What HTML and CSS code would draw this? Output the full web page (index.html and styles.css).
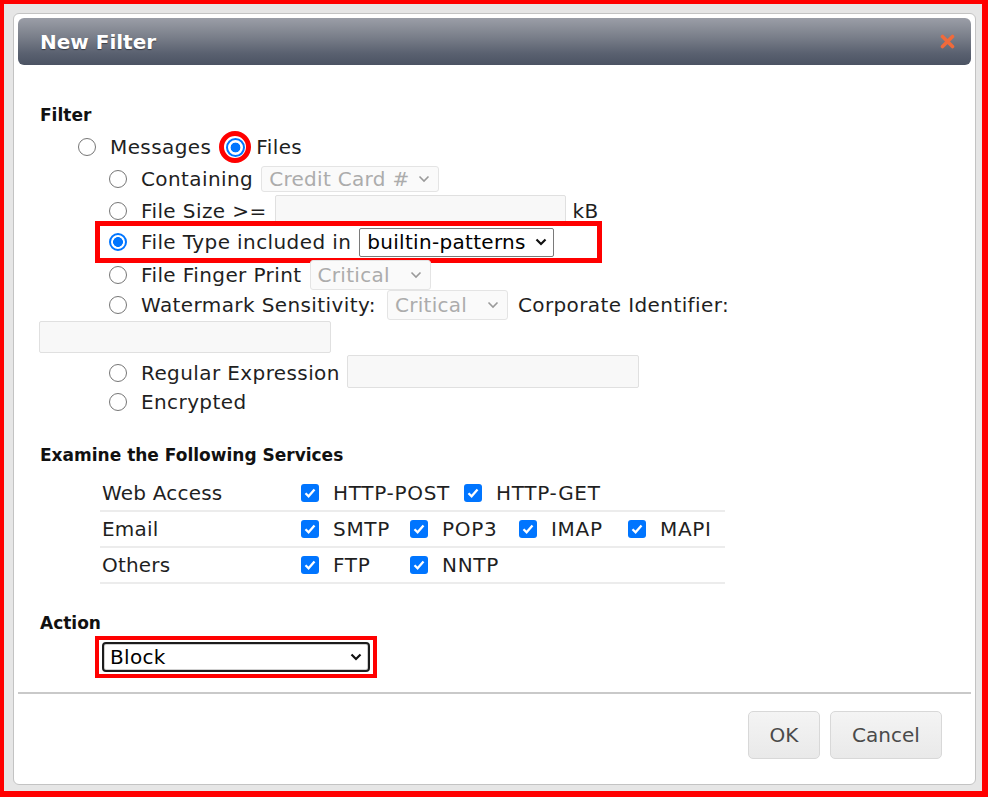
FILE: index.html
```html
<!DOCTYPE html>
<html>
<head>
<meta charset="utf-8">
<title>New Filter</title>
<link rel="stylesheet" href="styles.css">
</head>
<body>
<div class="frame">
  <div class="dialog">
    <div class="titlebar">
      <span class="title">New Filter</span>
      <svg class="close" width="15" height="15" viewBox="0 0 15 15"><path d="M2.5 2.5 L12.5 12.5 M12.5 2.5 L2.5 12.5" stroke="#f06a3a" stroke-width="3.6" stroke-linecap="round"/></svg>
    </div>
    <div class="content">
      <div class="heading h-filter">Filter</div>
      <div class="row lvl1">
        <span class="radio"></span><span class="lbl">Messages</span>
        <span class="ring"><span class="radio on"></span></span><span class="lbl">Files</span>
      </div>
      <div class="row lvl2">
        <span class="radio"></span><span class="lbl">Containing</span>
        <span class="select dis w-cc"><span class="val">Credit Card #</span><svg class="chev" width="12" height="8" viewBox="0 0 12 8"><path d="M1.5 1.5 L6 6 L10.5 1.5" fill="none" stroke="#9a9a9a" stroke-width="1.6"/></svg></span>
      </div>
      <div class="row lvl2">
        <span class="radio"></span><span class="lbl">File Size &gt;=</span>
        <span class="input dis w-size"></span><span class="lbl kb">kB</span>
      </div>
      <div class="row lvl2 annot-row">
        <span class="annot-box">
          <span class="radio on"></span><span class="lbl">File Type included in</span>
          <span class="select live w-bp"><span class="val">builtin-patterns</span><svg class="chev" width="12" height="8" viewBox="0 0 12 8"><path d="M1.5 1.5 L6 6 L10.5 1.5" fill="none" stroke="#111" stroke-width="2.2"/></svg></span>
        </span>
      </div>
      <div class="row lvl2 r-finger">
        <span class="radio"></span><span class="lbl">File Finger Print</span>
        <span class="select dis w-crit"><span class="val">Critical</span><svg class="chev" width="12" height="8" viewBox="0 0 12 8"><path d="M1.5 1.5 L6 6 L10.5 1.5" fill="none" stroke="#9a9a9a" stroke-width="1.6"/></svg></span>
      </div>
      <div class="row lvl2 r-water">
        <span class="radio"></span><span class="lbl">Watermark Sensitivity:</span>
        <span class="select dis w-crit"><span class="val">Critical</span><svg class="chev" width="12" height="8" viewBox="0 0 12 8"><path d="M1.5 1.5 L6 6 L10.5 1.5" fill="none" stroke="#9a9a9a" stroke-width="1.6"/></svg></span>
        <span class="lbl corp">Corporate Identifier:</span>
      </div>
      <div class="row r-corp">
        <span class="input dis w-corp"></span>
      </div>
      <div class="row lvl2 r-regex">
        <span class="radio"></span><span class="lbl">Regular Expression</span>
        <span class="input dis w-regex"></span>
      </div>
      <div class="row lvl2 r-enc">
        <span class="radio"></span><span class="lbl">Encrypted</span>
      </div>

      <div class="heading h-services">Examine the Following Services</div>
      <div class="services">
        <div class="srow">
          <div class="sname">Web Access</div>
          <div class="sitems flow">
            <span class="item"><span class="cb"><svg width="18" height="18" viewBox="0 0 18 18"><path d="M4.5 9.2 L7.6 12.3 L13.5 5.6" fill="none" stroke="#fff" stroke-width="2.3"/></svg></span><span class="lbl">HTTP-POST</span></span>
            <span class="item"><span class="cb"><svg width="18" height="18" viewBox="0 0 18 18"><path d="M4.5 9.2 L7.6 12.3 L13.5 5.6" fill="none" stroke="#fff" stroke-width="2.3"/></svg></span><span class="lbl">HTTP-GET</span></span>
          </div>
        </div>
        <div class="srow">
          <div class="sname">Email</div>
          <div class="sitems cols">
            <span class="item"><span class="cb"><svg width="18" height="18" viewBox="0 0 18 18"><path d="M4.5 9.2 L7.6 12.3 L13.5 5.6" fill="none" stroke="#fff" stroke-width="2.3"/></svg></span><span class="lbl">SMTP</span></span>
            <span class="item"><span class="cb"><svg width="18" height="18" viewBox="0 0 18 18"><path d="M4.5 9.2 L7.6 12.3 L13.5 5.6" fill="none" stroke="#fff" stroke-width="2.3"/></svg></span><span class="lbl">POP3</span></span>
            <span class="item"><span class="cb"><svg width="18" height="18" viewBox="0 0 18 18"><path d="M4.5 9.2 L7.6 12.3 L13.5 5.6" fill="none" stroke="#fff" stroke-width="2.3"/></svg></span><span class="lbl">IMAP</span></span>
            <span class="item"><span class="cb"><svg width="18" height="18" viewBox="0 0 18 18"><path d="M4.5 9.2 L7.6 12.3 L13.5 5.6" fill="none" stroke="#fff" stroke-width="2.3"/></svg></span><span class="lbl">MAPI</span></span>
          </div>
        </div>
        <div class="srow">
          <div class="sname">Others</div>
          <div class="sitems cols">
            <span class="item"><span class="cb"><svg width="18" height="18" viewBox="0 0 18 18"><path d="M4.5 9.2 L7.6 12.3 L13.5 5.6" fill="none" stroke="#fff" stroke-width="2.3"/></svg></span><span class="lbl">FTP</span></span>
            <span class="item"><span class="cb"><svg width="18" height="18" viewBox="0 0 18 18"><path d="M4.5 9.2 L7.6 12.3 L13.5 5.6" fill="none" stroke="#fff" stroke-width="2.3"/></svg></span><span class="lbl">NNTP</span></span>
          </div>
        </div>
      </div>

      <div class="heading h-action">Action</div>
      <div class="action-wrap">
        <span class="select action"><span class="val">Block</span><svg class="chev" width="12" height="8" viewBox="0 0 12 8"><path d="M1.5 1.5 L6 6 L10.5 1.5" fill="none" stroke="#111" stroke-width="2.2"/></svg></span>
      </div>
    </div>
    <div class="divider"></div>
    <div class="footer">
      <button class="btn ok">OK</button>
      <button class="btn cancel">Cancel</button>
    </div>
  </div>
</div>
</body>
</html>
```

FILE: styles.css
```css
html, body {
  margin: 0;
  padding: 0;
}
body {
  font-family: "DejaVu Sans", Verdana, sans-serif;
  font-size: 20px;
  color: #1f1f1f;
  background: #fff;
}
.frame {
  width: 988px;
  height: 797px;
  box-sizing: border-box;
  border-style: solid;
  border-color: #ff0000;
  border-width: 4px 6px 6px 4px;
  padding: 9px 6px 6px 9px;
  background: #e6e6e6;
}
.dialog {
  height: 100%;
  box-sizing: border-box;
  border: 1px solid #c3c3c3;
  border-radius: 6px;
  background: #fff;
  padding: 4px;
  display: flex;
  flex-direction: column;
}
.titlebar {
  height: 47px;
  flex: none;
  border-radius: 6px;
  background: linear-gradient(to bottom, #9b9ea7 0%, #7a7f8a 40%, #5a6170 75%, #4b5363 100%);
  display: flex;
  align-items: center;
  justify-content: space-between;
  padding: 0 16px 0 22px;
}
.title {
  font-family: "DejaVu Sans", Verdana, sans-serif;
  font-weight: bold;
  font-size: 20px;
  color: #fff;
  text-shadow: 0 1px 1px rgba(0,0,0,0.45);
}
.close {
  display: block;
}
.content {
  padding: 38px 0 0 22px;
  flex: none;
}
.heading {
  font-family: "DejaVu Sans", Verdana, sans-serif;
  font-weight: bold;
  font-size: 17px;
  line-height: 24px;
  color: #111;
}
.h-filter { margin-bottom: 4px; }
.h-services { margin-top: 28px; margin-bottom: 9px; }
.h-action { margin-top: 27px; margin-bottom: 1px; }

.row {
  display: flex;
  align-items: center;
  height: 32px;
  white-space: nowrap;
}
.lvl1 { padding-left: 38px; }
.lvl2 { padding-left: 69px; }
.r-finger { height: 31px; }
.r-water { height: 30px; }
.r-corp { height: 34px; padding-left: 0; margin-left: -1px; }
.r-regex { height: 35px; padding-top: 2px; box-sizing: border-box; }
.r-enc { height: 26px; }

.radio {
  display: inline-block;
  width: 18px;
  height: 18px;
  box-sizing: border-box;
  border: 1.5px solid #767676;
  border-radius: 50%;
  background: #fff;
  margin-right: 14px;
  flex: none;
}
.radio.on {
  border: 2px solid #0075ff;
  background: radial-gradient(circle, #0075ff 0 4.6px, #fff 5.2px);
}
.ring {
  display: inline-flex;
  align-items: center;
  justify-content: center;
  width: 32px;
  height: 32px;
  box-sizing: border-box;
  border: 5px solid #ff0000;
  border-radius: 50%;
  margin: 0 5px 0 8px;
}
.ring .radio {
  margin: 0;
  width: 19px;
  height: 19px;
}
.lbl {
  display: inline-block;
  letter-spacing: 0.4px;
}
.kb { margin-left: 7px; }
.corp { margin-left: 10px; }

.select {
  display: inline-flex;
  align-items: center;
  justify-content: space-between;
  box-sizing: border-box;
  border-radius: 3px;
  padding: 0 8px 0 7px;
  margin-left: 8px;
  flex: none;
}
.select .val { letter-spacing: 0.3px; }
.select.dis {
  border: 1px solid #e4e4e4;
  background: #fafafa;
  color: #acacac;
}
.select.live {
  border: 1px solid #7a7a7a;
  background: #fff;
  color: #000;
  border-radius: 2px;
}
.w-cc { width: 178px; height: 26px; }
.w-bp { width: 195px; height: 29px; margin-left: 8px; padding-right: 6px; }
.w-crit { width: 121px; height: 30px; }
.r-water .w-crit { margin-left: 11px; }
.chev { flex: none; display: block; }

.input {
  display: inline-block;
  box-sizing: border-box;
  border: 1px solid #e0e0e0;
  border-radius: 2px;
  background: #f8f8f8;
  flex: none;
}
.w-size { width: 291px; height: 30px; margin-left: 8px; margin-top: -3px; }
.w-corp { width: 292px; height: 32px; }
.w-regex { width: 292px; height: 33px; margin-left: 7px; margin-top: -2px; }

.annot-row {
  padding-left: 55px;
}
.annot-box {
  display: flex;
  align-items: center;
  box-sizing: border-box;
  width: 507px;
  height: 42px;
  border: 5px solid #ff0000;
  padding-left: 9px;
  margin-top: -2px;
}

.services {
  margin-left: 60px;
  width: 625px;
}
.srow {
  display: flex;
  align-items: center;
  height: 34px;
  border-bottom: 2px solid #ececec;
}
.sname {
  width: 198px;
  padding-left: 2px;
  flex: none;
  letter-spacing: 0.2px;
}
.sitems.flow {
  display: flex;
  gap: 14px;
  padding-left: 1px;
}
.sitems.cols {
  display: grid;
  grid-template-columns: repeat(4, 109px);
  padding-left: 1px;
}
.sitems .lbl { letter-spacing: 0.7px; }
.item {
  display: inline-flex;
  align-items: center;
}
.cb {
  width: 18px;
  height: 18px;
  border-radius: 3px;
  background: #0075ff;
  margin-right: 14px;
  flex: none;
}
.cb svg { display: block; }

.action-wrap {
  margin-left: 55px;
  width: 282px;
  height: 42px;
  box-sizing: border-box;
  border: 4px solid #ff0000;
  padding: 2px 3px;
}
.select.action {
  margin: 0;
  width: 268px;
  height: 30px;
  border: 2px solid #1c1c1c;
  border-radius: 4px;
  background: #fff;
  color: #000;
  padding: 0 6px 0 6px;
  box-shadow: inset 0 0 0 1px #cfcfcf;
}

.divider {
  flex: none;
  height: 2px;
  background: #c9c9c9;
  margin-top: 14px;
}
.footer {
  display: flex;
  justify-content: flex-end;
  gap: 10px;
  padding: 17px 29px 0 0;
}
.btn {
  font-family: "DejaVu Sans", Verdana, sans-serif;
  font-size: 20px;
  color: #4a4a4a;
  height: 48px;
  box-sizing: border-box;
  border: 1px solid #d8d8d8;
  border-radius: 5px;
  background: linear-gradient(to bottom, #f4f4f4, #e9e9e9);
  padding: 0;
}
.ok { width: 72px; }
.cancel { width: 112px; }
```
